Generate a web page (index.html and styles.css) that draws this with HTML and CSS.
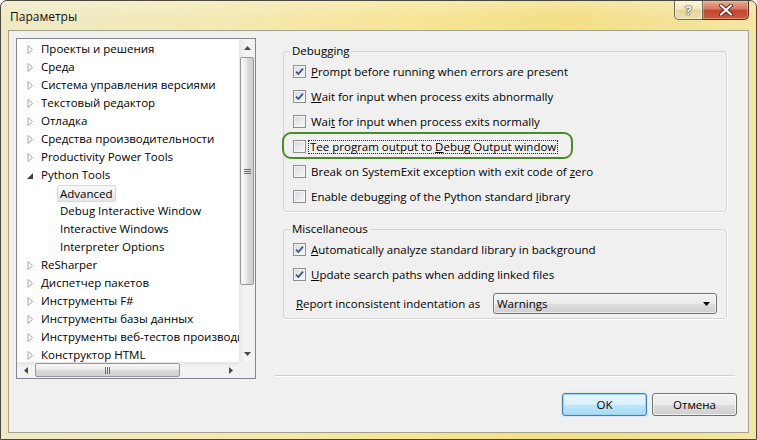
FILE: index.html
```html
<!DOCTYPE html>
<html>
<head>
<meta charset="utf-8">
<link rel="stylesheet" href="styles.css">
</head>
<body>
<div class="window">
  <div class="titlebar">
    <span class="title">Параметры</span>
    <div class="caption">
      <div class="cap cap-help">?</div>
      <div class="cap cap-close">
        <svg width="14" height="12" viewBox="0 0 14 12"><path d="M2 1.5 L12 10.5 M12 1.5 L2 10.5" stroke="#5a2218" stroke-width="4" stroke-linecap="round"/><path d="M2 1.5 L12 10.5 M12 1.5 L2 10.5" stroke="#fff" stroke-width="2.2" stroke-linecap="round"/></svg>
      </div>
    </div>
  </div>
  <div class="client">
    <div class="main">
      <div class="tree">
        <div class="tree-top">
          <div class="items">
            <div class="node"><svg class="exp" width="7" height="9" viewBox="0 0 7 9"><polygon points="1,0.5 5.5,4.5 1,8.5" fill="#fff" stroke="#a6a6a6"/></svg><span>Проекты и решения</span></div>
            <div class="node"><svg class="exp" width="7" height="9" viewBox="0 0 7 9"><polygon points="1,0.5 5.5,4.5 1,8.5" fill="#fff" stroke="#a6a6a6"/></svg><span>Среда</span></div>
            <div class="node"><svg class="exp" width="7" height="9" viewBox="0 0 7 9"><polygon points="1,0.5 5.5,4.5 1,8.5" fill="#fff" stroke="#a6a6a6"/></svg><span>Система управления версиями</span></div>
            <div class="node"><svg class="exp" width="7" height="9" viewBox="0 0 7 9"><polygon points="1,0.5 5.5,4.5 1,8.5" fill="#fff" stroke="#a6a6a6"/></svg><span>Текстовый редактор</span></div>
            <div class="node"><svg class="exp" width="7" height="9" viewBox="0 0 7 9"><polygon points="1,0.5 5.5,4.5 1,8.5" fill="#fff" stroke="#a6a6a6"/></svg><span>Отладка</span></div>
            <div class="node"><svg class="exp" width="7" height="9" viewBox="0 0 7 9"><polygon points="1,0.5 5.5,4.5 1,8.5" fill="#fff" stroke="#a6a6a6"/></svg><span>Средства производительности</span></div>
            <div class="node"><svg class="exp" width="7" height="9" viewBox="0 0 7 9"><polygon points="1,0.5 5.5,4.5 1,8.5" fill="#fff" stroke="#a6a6a6"/></svg><span>Productivity Power Tools</span></div>
            <div class="node"><svg class="exp" width="7" height="9" viewBox="0 0 7 9"><polygon points="6,2 6,8 0,8" fill="#3c3c3c"/></svg><span>Python Tools</span></div>
            <div class="node child"><span class="sel">Advanced</span></div>
            <div class="node child"><span class="lbl">Debug Interactive Window</span></div>
            <div class="node child"><span class="lbl">Interactive Windows</span></div>
            <div class="node child"><span class="lbl">Interpreter Options</span></div>
            <div class="node"><svg class="exp" width="7" height="9" viewBox="0 0 7 9"><polygon points="1,0.5 5.5,4.5 1,8.5" fill="#fff" stroke="#a6a6a6"/></svg><span>ReSharper</span></div>
            <div class="node"><svg class="exp" width="7" height="9" viewBox="0 0 7 9"><polygon points="1,0.5 5.5,4.5 1,8.5" fill="#fff" stroke="#a6a6a6"/></svg><span>Диспетчер пакетов</span></div>
            <div class="node"><svg class="exp" width="7" height="9" viewBox="0 0 7 9"><polygon points="1,0.5 5.5,4.5 1,8.5" fill="#fff" stroke="#a6a6a6"/></svg><span>Инструменты F#</span></div>
            <div class="node"><svg class="exp" width="7" height="9" viewBox="0 0 7 9"><polygon points="1,0.5 5.5,4.5 1,8.5" fill="#fff" stroke="#a6a6a6"/></svg><span>Инструменты базы данных</span></div>
            <div class="node"><svg class="exp" width="7" height="9" viewBox="0 0 7 9"><polygon points="1,0.5 5.5,4.5 1,8.5" fill="#fff" stroke="#a6a6a6"/></svg><span>Инструменты веб-тестов производительности</span></div>
            <div class="node"><svg class="exp" width="7" height="9" viewBox="0 0 7 9"><polygon points="1,0.5 5.5,4.5 1,8.5" fill="#fff" stroke="#a6a6a6"/></svg><span>Конструктор HTML</span></div>
          </div>
          <div class="vscroll">
            <div class="sbtn"><svg width="7" height="4" viewBox="0 0 7 4"><polygon points="0,4 3.5,0 7,4" fill="#4a4a4a"/></svg></div>
            <div class="vthumb"><svg width="7" height="7" viewBox="0 0 7 7"><path d="M0 1.5h7M0 3.5h7M0 5.5h7" stroke="#6a6a6a"/></svg></div>
            <div class="vtrack"></div>
            <div class="sbtn"><svg width="7" height="4" viewBox="0 0 7 4"><polygon points="0,0 7,0 3.5,4" fill="#4a4a4a"/></svg></div>
          </div>
        </div>
        <div class="hrow">
          <div class="hscroll">
            <div class="hbtn"><svg width="4" height="7" viewBox="0 0 4 7"><polygon points="4,0 4,7 0,3.5" fill="#4a4a4a"/></svg></div>
            <div class="hthumb"><svg width="7" height="7" viewBox="0 0 7 7"><path d="M1.5 0v7M3.5 0v7M5.5 0v7" stroke="#6a6a6a"/></svg></div>
            <div class="htrack"></div>
            <div class="hbtn"><svg width="4" height="7" viewBox="0 0 4 7"><polygon points="0,0 4,3.5 0,7" fill="#4a4a4a"/></svg></div>
          </div>
          <div class="corner"></div>
        </div>
      </div>
      <div class="right">
        <fieldset class="group">
          <legend>Debugging</legend>
          <div class="row"><span class="cb checked"><svg width="9" height="9" viewBox="0 0 9 9"><path d="M1 4.6 L3.4 7 L8 1.6" fill="none" stroke="#3b4f86" stroke-width="1.7"/></svg></span><span><u>P</u>rompt before running when errors are present</span></div>
          <div class="row"><span class="cb checked"><svg width="9" height="9" viewBox="0 0 9 9"><path d="M1 4.6 L3.4 7 L8 1.6" fill="none" stroke="#3b4f86" stroke-width="1.7"/></svg></span><span><u>W</u>ait for input when process exits abnormally</span></div>
          <div class="row"><span class="cb"></span><span>Wai<u>t</u> for input when process exits normally</span></div>
          <div class="row"><span class="hl"></span><span class="cb focus-cb"></span><span class="focus">Tee program output to <u>D</u>ebug Output window</span></div>
          <div class="row"><span class="cb"></span><span>Break on SystemExit exception with exit code of <u>z</u>ero</span></div>
          <div class="row"><span class="cb"></span><span>Enable debugging of the Python standard <u>l</u>ibrary</span></div>
        </fieldset>
        <fieldset class="group misc">
          <legend>Miscellaneous</legend>
          <div class="row"><span class="cb checked"><svg width="9" height="9" viewBox="0 0 9 9"><path d="M1 4.6 L3.4 7 L8 1.6" fill="none" stroke="#3b4f86" stroke-width="1.7"/></svg></span><span><u>A</u>utomatically analyze standard library in background</span></div>
          <div class="row"><span class="cb checked"><svg width="9" height="9" viewBox="0 0 9 9"><path d="M1 4.6 L3.4 7 L8 1.6" fill="none" stroke="#3b4f86" stroke-width="1.7"/></svg></span><span><u>U</u>pdate search paths when adding linked files</span></div>
          <div class="ddrow">
            <span><u>R</u>eport inconsistent indentation as</span>
            <div class="dropdown"><span>Warnings</span><svg width="7" height="4" viewBox="0 0 7 4"><polygon points="0,0 7,0 3.5,4" fill="#000"/></svg></div>
          </div>
        </fieldset>
        <div class="sep"></div>
      </div>
    </div>
    <div class="buttons">
      <div class="btn default">OK</div>
      <div class="btn">Отмена</div>
    </div>
  </div>
</div>
</body>
</html>
```

FILE: styles.css
```css
* { box-sizing: border-box; }
body {
  margin: 0;
  font-family: "Open Sans", "Noto Sans", sans-serif;
  font-size: 11.5px;
  color: #000;
  background: #fff;
}
.window {
  width: 757px;
  height: 440px;
  border: 1px solid #4a483c;
  border-radius: 7px 7px 0 0;
  background: linear-gradient(to right, #efeac6 0%, #f3e9b2 30%, #f6e595 55%, #f2df86 75%, #f4e6a4 100%);
  display: flex;
  flex-direction: column;
  overflow: hidden;
}
.titlebar {
  height: 29px;
  display: flex;
  align-items: flex-start;
  flex-shrink: 0;
  background: linear-gradient(to bottom, rgba(255,255,255,0.25), rgba(255,255,255,0) 60%);
}
.title {
  margin: 7px 0 0 9px;
  line-height: 18px;
  font-size: 12px;
  color: #111;
}
.caption {
  margin-left: auto;
  margin-right: 7px;
  display: flex;
}
.cap {
  height: 19px;
  display: flex;
  align-items: center;
  justify-content: center;
}
.cap-help {
  width: 29px;
  border: 1px solid #6b6856;
  border-top: none;
  border-radius: 0 0 0 5px;
  background: linear-gradient(#faf5dd, #f0e7b8 45%, #e4d69d 50%, #ece0ad);
  color: #fff;
  font-weight: bold;
  font-size: 13px;
  text-shadow: 0 0 1px #333, 0 0 2px #555, 0 0 1px #333;
  box-shadow: inset 0 0 0 1px rgba(255,255,255,0.5);
}
.cap-close {
  width: 46px;
  border: 1px solid #5a2a22;
  border-left: none;
  border-top: none;
  border-radius: 0 0 5px 0;
  background: linear-gradient(#e9a996, #d87862 45%, #c2452d 50%, #cc5a40 100%);
  box-shadow: inset 0 0 0 1px rgba(255,220,200,0.4);
}
.client {
  margin: 0 7px 6px 7px;
  flex: 1;
  border: 1px solid #a3a08c;
  background: #f0f0f0;
  padding: 7px 11px 0 7px;
  display: flex;
  flex-direction: column;
}
.main {
  display: flex;
  height: 341px;
}
.tree {
  width: 240px;
  border: 1px solid #828790;
  background: #fff;
  display: flex;
  flex-direction: column;
}
.tree-top {
  display: flex;
  height: 323px;
}
.items {
  flex: 1;
  min-width: 0;
  overflow: hidden;
  padding-top: 1px;
}
.node {
  height: 18px;
  line-height: 18px;
  display: flex;
  align-items: center;
  padding-left: 10px;
  white-space: nowrap;
}
.exp { margin-right: 7px; flex-shrink: 0; }
.node.child { padding-left: 40px; }
.lbl { padding: 0 3px; }
.sel {
  padding: 0 2px;
  line-height: 15px;
  border: 1px solid #d9d9d9;
  border-radius: 2px;
  background: linear-gradient(#fafafa, #e6e6e6);
}
.vscroll {
  width: 16px;
  display: flex;
  flex-direction: column;
  background: linear-gradient(to right, #e6e6e6, #f4f4f4 40%, #f1f1f1);
}
.sbtn {
  height: 17px;
  display: flex;
  align-items: center;
  justify-content: center;
  flex-shrink: 0;
}
.vthumb {
  margin: 1px 1px 0 1px;
  height: 228px;
  border: 1px solid #979797;
  border-radius: 2px;
  background: linear-gradient(to right, #f7f7f7, #ececec 45%, #dadada 55%, #cfcfcf);
  display: flex;
  align-items: center;
  justify-content: center;
  flex-shrink: 0;
}
.vtrack { flex: 1; }
.hrow { display: flex; height: 16px; }
.hscroll {
  flex: 1;
  display: flex;
  background: linear-gradient(#e6e6e6, #f4f4f4 40%, #f1f1f1);
}
.hbtn {
  width: 17px;
  display: flex;
  align-items: center;
  justify-content: center;
  flex-shrink: 0;
}
.hthumb {
  margin: 1px 0 1px 1px;
  width: 145px;
  border: 1px solid #979797;
  border-radius: 2px;
  background: linear-gradient(#f7f7f7, #ececec 45%, #dadada 55%, #cfcfcf);
  display: flex;
  align-items: center;
  justify-content: center;
  flex-shrink: 0;
}
.htrack { flex: 1; }
.corner { width: 16px; background: #f0f0f0; }
.right {
  margin-left: 19px;
  margin-right: 2px;
  flex: 1;
  display: flex;
  flex-direction: column;
}
.group {
  margin: 5px 8px 0 8px;
  padding: 0 0 2px 0;
  border: 1px solid #d5d5d5;
  border-radius: 3px;
  box-shadow: 0 1px 0 #fff, 1px 0 0 #fff;
  min-width: 0;
}
.group legend {
  margin-left: 6px;
  padding: 0 2px;
  line-height: 16px;
}
.group.misc {
  margin-top: 9px;
  padding-bottom: 4px;
}
.row {
  position: relative;
  height: 25px;
  display: flex;
  align-items: center;
  padding-left: 9px;
  white-space: nowrap;
}
.cb {
  width: 13px;
  height: 13px;
  margin-right: 5px;
  border: 1px solid #8e8f8f;
  background: linear-gradient(135deg, #d5d9de, #f9f9f9);
  box-shadow: inset 0 0 0 1px #f4f4f4;
  display: flex;
  align-items: center;
  justify-content: center;
  flex-shrink: 0;
}
.cb.focus-cb { margin-right: 2px; }
.focus {
  border: 1px dotted #222;
  padding: 0 1px;
  line-height: 12px;
}
.hl {
  position: absolute;
  left: -2px;
  top: -2px;
  width: 291px;
  height: 27px;
  border: 2px solid #4a8c2a;
  border-radius: 9px;
}
.ddrow {
  margin-top: 6px;
  height: 21px;
  display: flex;
  align-items: center;
  padding-left: 12px;
  white-space: nowrap;
}
.dropdown {
  margin-left: auto;
  margin-right: 9px;
  width: 224px;
  height: 21px;
  border: 1px solid #707070;
  border-radius: 3px;
  background: linear-gradient(#f2f2f2, #ebebeb 50%, #dddddd 50%, #cfcfcf);
  box-shadow: inset 0 0 0 1px rgba(255,255,255,0.6);
  display: flex;
  align-items: center;
  justify-content: space-between;
  padding: 0 6px 0 3px;
}
.sep {
  margin-top: auto;
  height: 2px;
  border-top: 1px solid #d0d0d0;
  border-bottom: 1px solid #fff;
  margin-bottom: 2px;
}
.buttons {
  display: flex;
  justify-content: flex-end;
  gap: 5px;
  margin-top: 14px;
}
.btn {
  width: 85px;
  height: 23px;
  border: 1px solid #707070;
  border-radius: 3px;
  background: linear-gradient(#f2f2f2, #ebebeb 50%, #dddddd 50%, #cfcfcf);
  box-shadow: inset 0 0 0 1px rgba(255,255,255,0.7);
  display: flex;
  align-items: center;
  justify-content: center;
  line-height: 16px;
}
.btn.default {
  border-color: #3c7fb1;
  background: linear-gradient(#eaf6fd, #d9f0fc 50%, #bee6fd 50%, #a7d9f5);
  box-shadow: inset 0 0 0 1px #9ed5f3, 0 0 2px #a8d8f0;
}
```
